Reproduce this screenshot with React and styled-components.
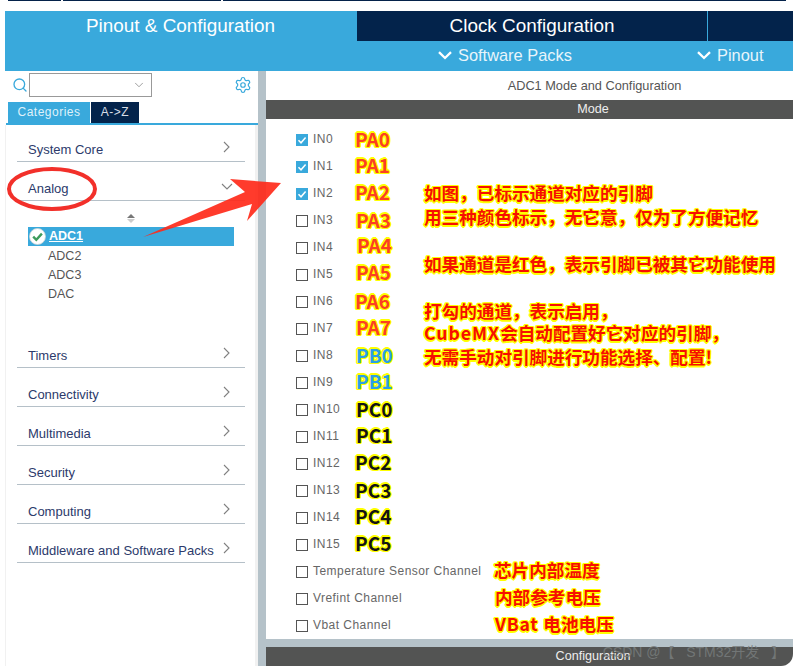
import React from "react";
import styled, { createGlobalStyle } from "styled-components";
import { ChevronDown, Search, Settings } from "lucide-react";

const GlobalStyle = createGlobalStyle`
  html, body {
    margin: 0;
    padding: 0;
    background: #fff;
    overflow: hidden;
  }
  * { box-sizing: border-box; }
`;

const Page = styled.div`
  position: relative;
  width: 793px;
  height: 666px;
  overflow: hidden;
  background: #fff;
  font-family: "Liberation Sans", Arial, sans-serif;
`;

const TopStrip = styled.div`
  display: flex;
  gap: 2px;
  height: 11px;
  padding: 0 7px 0 8px;
  align-items: flex-start;
`;

const TopSegment = styled.div`
  height: 1px;
  background: #04224a;
  flex: ${(p) => p.$grow};
`;

const Header = styled.div`
  margin-left: 5px;
  height: 60px;
  background: #39a9dc;
  display: flex;
  flex-direction: column;
`;

const TabRow = styled.div`
  display: flex;
  height: 30px;
`;

const MainTab = styled.div`
  width: ${(p) => p.$width}px;
  margin-right: ${(p) => (p.$gap ? 1 : 0)}px;
  background: ${(p) => (p.$active ? "#39a9dc" : "#03234b")};
  color: #fff;
  font-size: 18.9px;
  line-height: 30px;
  text-align: center;
  padding-bottom: 2px;
  flex: ${(p) => (p.$width ? "none" : 1)};
`;

const PackRow = styled.div`
  height: 30px;
  display: flex;
  color: #e8f5fb;
  font-size: 16.4px;
  align-items: center;
  padding: 0 0 1px 433px;
`;

const PackItem = styled.div`
  display: flex;
  align-items: center;
  gap: 6px;
  width: ${(p) => p.$width}px;
`;

const Body = styled.div`
  display: flex;
  margin-left: 5px;
  height: 595px;
`;

const LeftPanel = styled.div`
  width: 253px;
  flex: none;
  display: flex;
  flex-direction: column;
`;

const SearchRow = styled.div`
  display: flex;
  align-items: center;
  height: 24px;
  margin-top: 2px;
  padding-left: 7px;
  color: #39a9dc;
`;

const SearchBox = styled.div`
  width: 123px;
  height: 24px;
  margin-left: 1px;
  border: 1px solid #999;
  display: flex;
  align-items: center;
  justify-content: flex-end;
  padding-right: 5px;
  color: #777;
`;

const GearIcon = styled(Settings)`
  margin-left: 82px;
`;

const TabBar = styled.div`
  display: flex;
  gap: 1px;
  height: 21px;
  margin-top: 5px;
  padding-left: 3px;
`;

const SideTab = styled.div`
  width: ${(p) => p.$width}px;
  background: ${(p) => (p.$active ? "#39a9dc" : "#03234b")};
  color: ${(p) => (p.$active ? "#dff1fa" : "#d8dee6")};
  font-size: 12px;
  letter-spacing: 0.5px;
  line-height: 21px;
  text-align: center;
`;

const TabLine = styled.div`
  height: 2px;
  margin-left: 1px;
  background: #39a9dc;
`;

const CategoryList = styled.div`
  flex: 1;
  padding: 0 10px 0 11px;
  display: flex;
  flex-direction: column;
  border-left: 1px solid #f1f1f1;
  border-right: 3px solid #f1f1f1;
`;

const Category = styled.div`
  height: ${(p) => p.$height || 39}px;
  margin-top: ${(p) => p.$top || 0}px;
  border-bottom: 1px solid #b5c0c8;
  display: flex;
  align-items: flex-end;
  justify-content: space-between;
  padding: 0 12px 4px 11px;
  color: #2c3a6b;
  font-size: 13px;
  line-height: 15px;
`;

const ChevronGlyph = styled.svg`
  flex: none;
  margin-right: ${(p) => (p.$open ? 0 : 3)}px;
  margin-bottom: ${(p) => (p.$open ? 6 : 4)}px;
`;

const Expanded = styled.div`
  height: 116px;
  padding: 0 11px;
  display: flex;
  flex-direction: column;
`;

const Scroller = styled.div`
  height: 26px;
  display: flex;
  flex-direction: column;
  align-items: center;
  justify-content: center;
  gap: 1px;
  padding-top: 9px;
`;

const ScrollArrow = styled.div`
  width: 0;
  height: 0;
  border-left: 4px solid transparent;
  border-right: 4px solid transparent;
  border-bottom: ${(p) => (p.$up ? "4px solid #777" : "none")};
  border-top: ${(p) => (p.$up ? "none" : "4px solid #ccc")};
`;

const Peripheral = styled.div`
  height: 19px;
  line-height: 21px;
  padding-left: 20px;
  font-size: 12.5px;
  color: #555;
`;

const SelectedPeripheral = styled(Peripheral)`
  position: relative;
  line-height: 19px;
  padding-left: 21px;
  background: #39a9dc;
  color: #fff;
  font-weight: bold;
  text-decoration: underline;
  svg {
    position: absolute;
    left: 1px;
    top: 1px;
  }
`;

const Splitter = styled.div`
  width: 8px;
  flex: none;
  background: #b5c2c9;
`;

const RightPanel = styled.div`
  flex: 1;
  display: flex;
  flex-direction: column;
  min-width: 0;
`;

const PanelTitle = styled.div`
  height: 29px;
  padding-left: 130px;
  text-align: center;
  font-size: 12.75px;
  line-height: 29px;
  color: #555;
  white-space: nowrap;
`;

const SectionBar = styled.div`
  height: 19px;
  padding-left: 127px;
  background: #535453;
  color: #eee;
  font-size: 12.6px;
  line-height: 19px;
  text-align: center;
`;

const ChannelList = styled.div`
  flex: 1;
  padding: 7px 0 0 30px;
`;

const ChannelRow = styled.div`
  display: flex;
  align-items: center;
  height: 27px;
`;

const Box = styled.div`
  width: 12px;
  height: 12px;
  flex: none;
  border: 1px solid ${(p) => (p.$checked ? "#39a9dc" : "#555")};
  background: ${(p) => (p.$checked ? "#39a9dc" : "#fff")};
  display: flex;
  align-items: center;
  justify-content: center;
`;

const ChannelLabel = styled.span`
  margin-left: 5px;
  margin-top: -1px;
  font-size: 12px;
  letter-spacing: 0.45px;
  color: #666;
`;

const SplitterBand = styled.div`
  height: 8px;
  background: #b5c2c9;
`;

const ConfigBar = styled(SectionBar)`
  border-bottom-right-radius: 12px;
`;

const Overlay = styled.svg`
  position: absolute;
  left: 0;
  top: 0;
  pointer-events: none;
`;

const outline = (c) =>
  `${c} 1.5px 0 0, ${c} -1.5px 0 0, ${c} 0 1.5px 0, ${c} 0 -1.5px 0, ${c} 1px 1px 0, ${c} -1px -1px 0, ${c} 1px -1px 0, ${c} -1px 1px 0`;

const Annotation = styled.div`
  position: absolute;
  left: ${(p) => p.$x}px;
  top: ${(p) => p.$y}px;
  transform: translateY(calc(-50% - 1px));
  font-family: "Noto Sans CJK SC", "Noto Sans", sans-serif;
  font-weight: 700;
  white-space: nowrap;
  line-height: 1;
  text-shadow: ${outline("#ffff00")};
`;

const PinMark = styled(Annotation)`
  font-size: 19px;
  margin-left: -1px;
  color: ${(p) => p.$color};
`;

const Note = styled(Annotation)`
  font-size: 17.6px;
  color: #f60f00;
`;

const LatinRun = styled.span`
  letter-spacing: ${(p) => p.$spacing}px;
`;

const Watermark = styled.div`
  position: absolute;
  right: 8px;
  bottom: 4px;
  font-family: "Liberation Sans", "Noto Sans CJK SC", sans-serif;
  font-size: 14px;
  line-height: 20px;
  white-space: pre;
  color: rgba(120, 125, 125, 0.85);
`;

const categoriesAfter = ["Connectivity", "Multimedia", "Security", "Computing", "Middleware and Software Packs"];

const channels = [
  "IN0", "IN1", "IN2", "IN3", "IN4", "IN5", "IN6", "IN7",
  "IN8", "IN9", "IN10", "IN11", "IN12", "IN13", "IN14", "IN15",
  "Temperature Sensor Channel", "Vrefint Channel", "Vbat Channel",
];

const RED = "#fb4022";
const BLUE = "#2b9fe6";
const DARK = "#141414";

const pins = [
  ["PA0", 356, 139, RED], ["PA1", 356, 165, RED], ["PA2", 356, 192, RED], ["PA3", 357, 220, RED],
  ["PA4", 358, 245, RED], ["PA5", 357, 272, RED], ["PA6", 356, 301, RED], ["PA7", 357, 327, RED],
  ["PB0", 357, 355, BLUE], ["PB1", 357, 381, BLUE], ["PC0", 357, 409, DARK], ["PC1", 357, 435, DARK],
  ["PC2", 356, 462, DARK], ["PC3", 356, 490, DARK], ["PC4", 356, 516, DARK], ["PC5", 356, 543, DARK],
];

const notes = [
  ["如图，已标示通道对应的引脚", 424, 194],
  ["用三种颜色标示，无它意，仅为了方便记忆", 424, 218],
  ["如果通道是红色，表示引脚已被其它功能使用", 424, 265],
  ["打勾的通道，表示启用，", 424, 312],
  [<><LatinRun $spacing={1}>CubeMX</LatinRun>会自动配置好它对应的引脚，</>, 424, 334],
  ["无需手动对引脚进行功能选择、配置!", 424, 358],
  ["芯片内部温度", 494, 571],
  ["内部参考电压", 495, 598],
  [<><LatinRun $spacing={0.8}>VBat </LatinRun>电池电压</>, 495, 625],
];

const PackChevron = () => (
  <svg width="14" height="9" viewBox="0 0 14 9">
    <path d="M1 1.2 L7 7 L13 1.2" fill="none" stroke="#fff" strokeWidth="2.3" />
  </svg>
);

const RightChevron = () => (
  <ChevronGlyph width="7" height="12" viewBox="0 0 7 12">
    <path d="M1 1 L6 6 L1 11" fill="none" stroke="#808080" strokeWidth="1.1" />
  </ChevronGlyph>
);

const DownChevron = () => (
  <ChevronGlyph $open width="12" height="7" viewBox="0 0 12 7">
    <path d="M1 1 L6 6 L11 1" fill="none" stroke="#808080" strokeWidth="1.1" />
  </ChevronGlyph>
);

const CheckMark = () => (
  <svg width="10" height="10" viewBox="0 0 10 10">
    <path d="M1.5 5.2 L4 7.8 L8.6 2.4" fill="none" stroke="#fff" strokeWidth="1.5" />
  </svg>
);

const StatusIcon = () => (
  <svg width="17" height="17" viewBox="0 0 17 17">
    <circle cx="8.5" cy="8.5" r="8" fill="#fff" stroke="#c9d3d3" strokeWidth="0.8" />
    <path d="M4.2 8.6 L7.3 11.8 L12.9 5.6" fill="none" stroke="#3d9b5c" strokeWidth="2.4" />
  </svg>
);

export default function App() {
  return (
    <Page>
      <GlobalStyle />
      <TopStrip>
        <TopSegment $grow="0 0 53px" />
        <TopSegment $grow="0 0 158px" />
        <TopSegment $grow="1" />
      </TopStrip>

      <Header>
        <TabRow>
          <MainTab $active $width={351} $gap>Pinout &amp; Configuration</MainTab>
          <MainTab $width={350} $gap>Clock Configuration</MainTab>
          <MainTab />
        </TabRow>
        <PackRow>
          <PackItem $width={259}>
            <PackChevron />
            Software Packs
          </PackItem>
          <PackItem $width={80}>
            <PackChevron />
            Pinout
          </PackItem>
        </PackRow>
      </Header>

      <Body>
        <LeftPanel>
          <SearchRow>
            <Search size={16} strokeWidth={2} />
            <SearchBox>
              <ChevronDown size={14} strokeWidth={1.2} />
            </SearchBox>
            <GearIcon size={18} strokeWidth={1.6} />
          </SearchRow>
          <TabBar>
            <SideTab $active $width={82}>Categories</SideTab>
            <SideTab $width={48}>A-&gt;Z</SideTab>
          </TabBar>
          <TabLine />
          <CategoryList>
            <Category $height={37}>
              System Core
              <RightChevron />
            </Category>
            <Category>
              Analog
              <DownChevron />
            </Category>
            <Expanded>
              <Scroller>
                <ScrollArrow $up />
                <ScrollArrow />
              </Scroller>
              <SelectedPeripheral>
                <StatusIcon />
                ADC1
              </SelectedPeripheral>
              <Peripheral>ADC2</Peripheral>
              <Peripheral>ADC3</Peripheral>
              <Peripheral>DAC</Peripheral>
            </Expanded>
            <Category $top={12}>
              Timers
              <RightChevron />
            </Category>
            {categoriesAfter.map((name) => (
              <Category key={name}>
                {name}
                <RightChevron />
              </Category>
            ))}
          </CategoryList>
        </LeftPanel>

        <Splitter />

        <RightPanel>
          <PanelTitle>ADC1 Mode and Configuration</PanelTitle>
          <SectionBar>Mode</SectionBar>
          <ChannelList>
            {channels.map((name, i) => (
              <ChannelRow key={name}>
                <Box $checked={i < 3}>{i < 3 && <CheckMark />}</Box>
                <ChannelLabel>{name}</ChannelLabel>
              </ChannelRow>
            ))}
          </ChannelList>
          <SplitterBand />
          <ConfigBar>Configuration</ConfigBar>
        </RightPanel>
      </Body>

      {pins.map(([text, x, y, color]) => (
        <PinMark key={text} $x={x} $y={y} $color={color}>{text}</PinMark>
      ))}
      {notes.map(([text, x, y]) => (
        <Note key={y} $x={x} $y={y}>{text}</Note>
      ))}

      <Overlay width="793" height="666" viewBox="0 0 793 666">
        <ellipse cx="52" cy="189" rx="43" ry="20" fill="none" stroke="#f2302a" strokeWidth="4" />
        <path
          d="M143 237 L245 192 L230 179 L281 183 L247 221 L252 204 Z"
          fill="#ff2a1a"
          fillOpacity="0.92"
        />
      </Overlay>

      <Watermark>CSDN @【   STM32开发   】</Watermark>
    </Page>
  );
}
